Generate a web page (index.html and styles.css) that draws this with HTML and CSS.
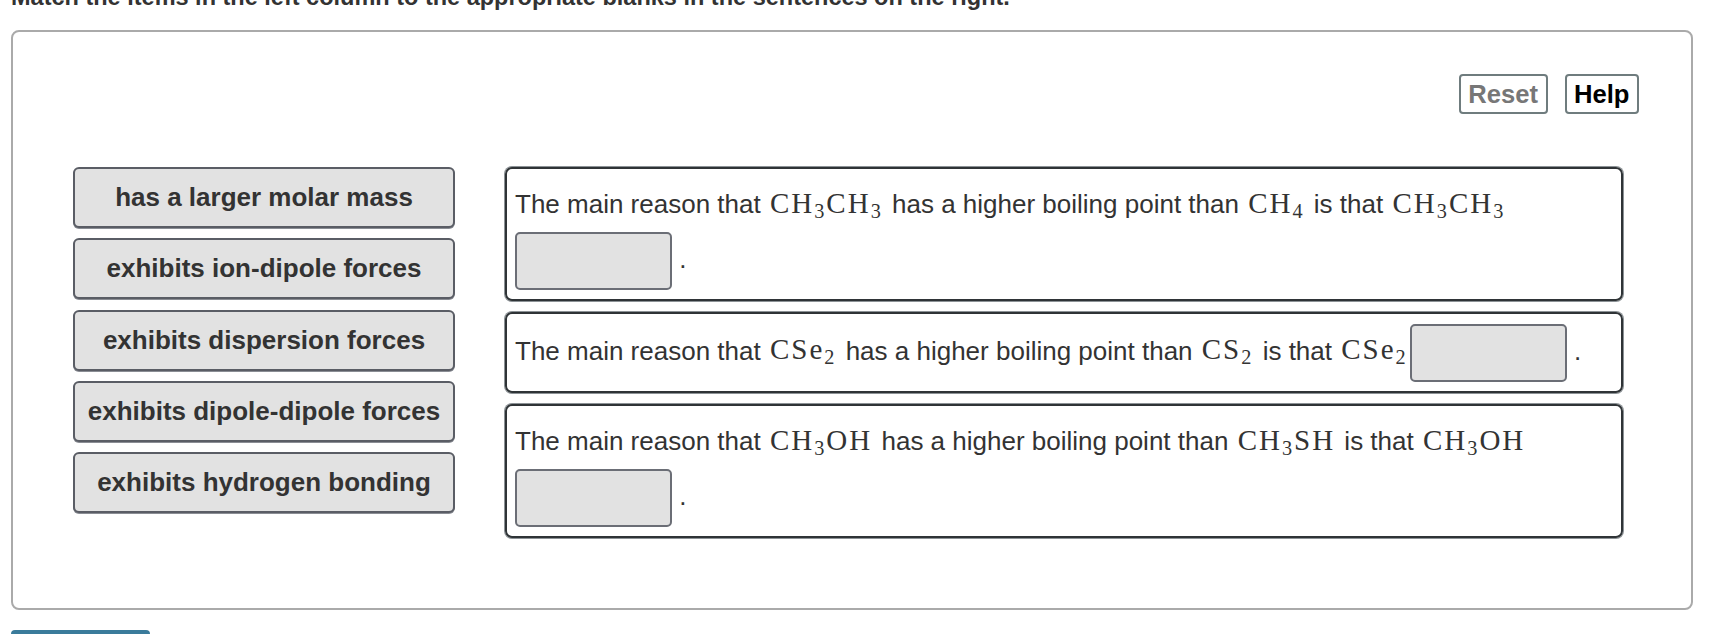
FILE: index.html
```html
<!DOCTYPE html>
<html lang="en">
<head>
  <meta charset="UTF-8" />
  <title>Match the items</title>
  <link rel="stylesheet" href="styles.css">
</head>
<body>

  <p class="prompt">Match the items in the left column to the appropriate blanks in the sentences on the right.</p>

  <div class="panel">
    <div class="toolbar">
      <button class="tool tool-reset">Reset</button>
      <button class="tool tool-help">Help</button>
    </div>

    <div class="match">
      <!-- items to drag -->
      <div class="items">
        <div class="item">has a larger molar mass</div>
        <div class="item">exhibits ion-dipole forces</div>
        <div class="item">exhibits dispersion forces</div>
        <div class="item">exhibits dipole-dipole forces</div>
        <div class="item">exhibits hydrogen bonding</div>
      </div>

      <!-- sentences with blanks -->
      <div class="sentences">
        <div class="sentence">
          The main reason that <span class="m">CH<sub>3</sub>CH<sub>3</sub></span> has a higher boiling point than <span class="m">CH<sub>4</sub></span> is that <span class="m">CH<sub>3</sub>CH<sub>3</sub></span> <span class="blank"></span> .
        </div>
        <div class="sentence">
          The main reason that <span class="m">CSe<sub>2</sub></span> has a higher boiling point than <span class="m">CS<sub>2</sub></span> is that <span class="m">CSe<sub>2</sub></span><span class="blank"></span> .
        </div>
        <div class="sentence">
          The main reason that <span class="m">CH<sub>3</sub>OH</span> has a higher boiling point than <span class="m">CH<sub>3</sub>SH</span> is that <span class="m">CH<sub>3</sub>OH</span> <span class="blank"></span> .
        </div>
      </div>
    </div>
  </div>

  <div class="submit"></div>

</body>
</html>
```

FILE: styles.css
```css
body {
  margin: 0;
  font-family: "Liberation Sans", Arial, sans-serif;
  color: #333;
  background-color: #fff;
}

.prompt {
  margin: -18px 0 18px 11px;
  font-size: 23.5px;
  font-weight: bold;
  line-height: 30px;
  white-space: nowrap;
}

.panel {
  margin-left: 11px;
  width: 1682px;
  box-sizing: border-box;
  border: 2px solid #aaa;
  border-radius: 8px;
  padding: 42px 68px 70px 60px;
}

.toolbar {
  display: flex;
  justify-content: flex-end;
  gap: 17px;
  margin-right: -16px;
  margin-bottom: 53px;
}

.tool {
  height: 40px;
  padding: 0 7.5px;
  font-family: "Liberation Sans", Arial, sans-serif;
  font-size: 25.6px;
  font-weight: bold;
  background-color: #fff;
  border: 2px solid #6f7c7e;
  border-radius: 4px;
  cursor: pointer;
}

.tool-reset {
  color: #777;
}

.tool-help {
  color: #000;
}

.match {
  display: flex;
  align-items: flex-start;
  gap: 50px;
}

.items {
  width: 382px;
  flex-shrink: 0;
  display: flex;
  flex-direction: column;
  gap: 10.3px;
}

.item {
  height: 61px;
  box-sizing: border-box;
  display: flex;
  align-items: center;
  justify-content: center;
  background-color: #e2e2e2;
  border: 2px solid #5a5d65;
  border-radius: 6px;
  box-shadow: 0 1px 0 #8a8d94;
  font-size: 26px;
  font-weight: bold;
  white-space: nowrap;
}

.sentences {
  width: 1118px;
  display: flex;
  flex-direction: column;
  gap: 11px;
}

.sentence {
  border: 2px solid #2f3437;
  border-radius: 7px;
  box-shadow: 0 0 0 1px #8c9296;
  padding: 7.5px 8px;
  font-size: 26px;
  line-height: 52px;
}

/* chemical formulas */
.m {
  font-family: "Liberation Serif", "Times New Roman", serif;
  font-size: 29px;
  letter-spacing: 2px;
  margin: 0 2px;
}

.m sub {
  font-size: 70%;
  vertical-align: -5px;
  line-height: 0;
}

.blank {
  display: inline-block;
  width: 157px;
  height: 58px;
  box-sizing: border-box;
  margin: 2px 0;
  vertical-align: middle;
  background-color: #e2e2e2;
  border: 2px solid #6b6e76;
  border-radius: 5px;
}

.submit {
  margin: 20px 0 0 11px;
  width: 139px;
  height: 40px;
  background-color: #3a7b9b;
  border-radius: 4px 4px 0 0;
}
```
